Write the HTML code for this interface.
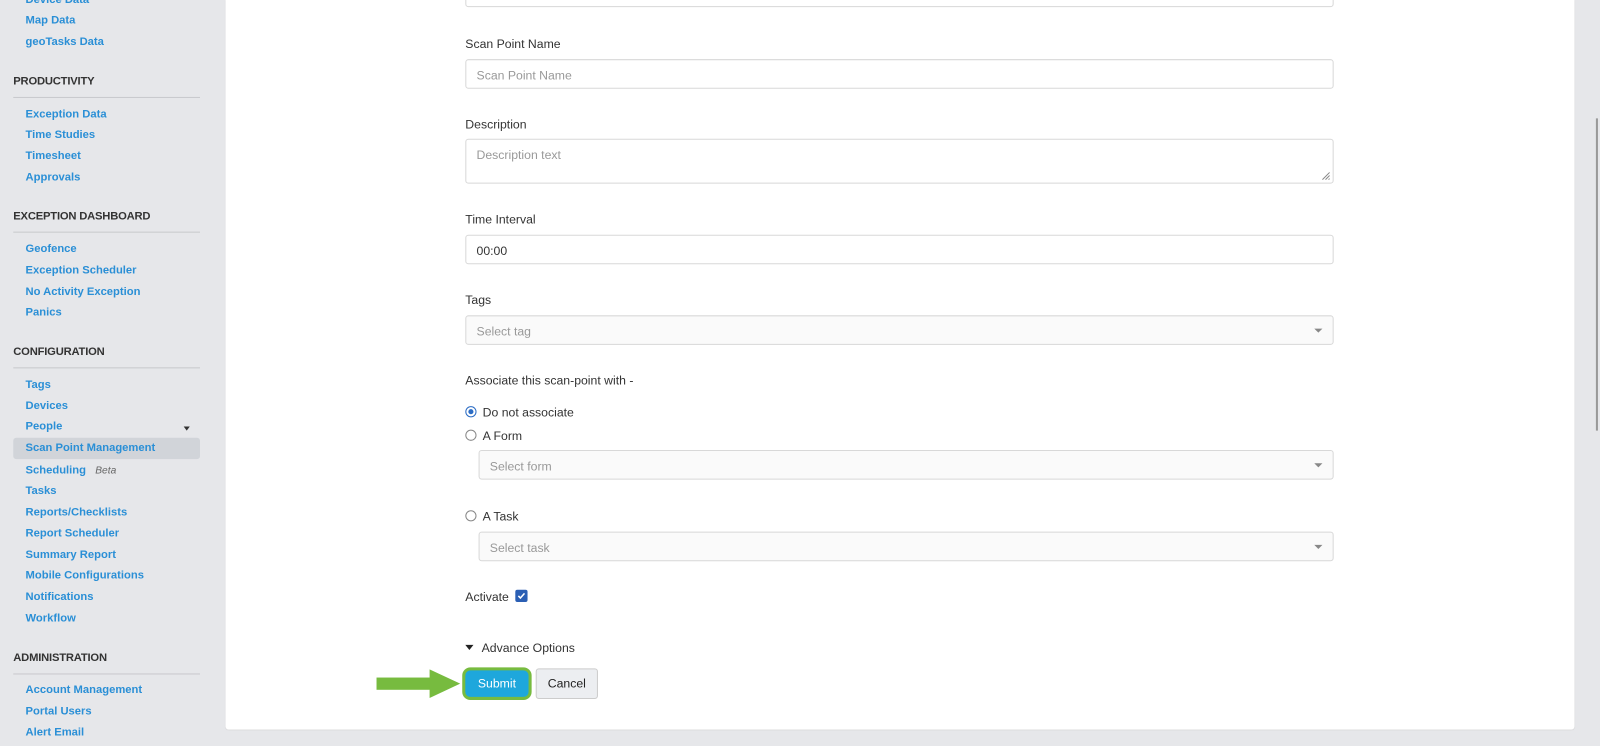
<!DOCTYPE html>
<html><head><style>
*{box-sizing:border-box;margin:0;padding:0}
body{width:1600px;height:746px;background:#e6e7ea;font-family:"Liberation Sans",sans-serif;position:relative;overflow:hidden}
#w{position:absolute;left:0;top:0;width:1568px;height:731px;transform:scale(1.0204);transform-origin:0 0}
.a{position:absolute}
.sb a{position:absolute;left:25px;font-size:11px;font-weight:bold;color:#2a8fd6;text-decoration:none;white-space:nowrap}
.sb h4{position:absolute;left:13px;font-size:11px;font-weight:bold;color:#333;letter-spacing:-.2px}
.sb hr{position:absolute;left:13px;width:183px;border:0;border-top:1px solid #c8c9cc}
.card{position:absolute;left:221px;top:0;width:1322px;height:715px;background:#fff;border-radius:0 0 3px 3px;box-shadow:0 0 1px #ccc}
.lbl{position:absolute;left:456px;font-size:12px;color:#333}
.inp{position:absolute;left:456px;width:851px;height:29px;border:1px solid #d8d8d8;border-radius:3px;background:#fff;font-size:12px;color:#999;padding:8px 10px}
.sel{background:#fafafa}
.caret{position:absolute;right:10px;top:12px;width:0;height:0;border-left:4px solid transparent;border-right:4px solid transparent;border-top:4px solid #888}
.rad{position:absolute;left:456px;width:11px;height:11px;border:1px solid #888;border-radius:50%}
</style></head><body><div id="w">
<div class="sb">
<a style="top:-6px">Device Data</a>
<a style="top:14px">Map Data</a>
<a style="top:35px">geoTasks Data</a>
<h4 style="top:74px">PRODUCTIVITY</h4><hr style="top:95px">
<a style="top:106px">Exception Data</a>
<a style="top:126px">Time Studies</a>
<a style="top:147px">Timesheet</a>
<a style="top:168px">Approvals</a>
<h4 style="top:206px">EXCEPTION DASHBOARD</h4><hr style="top:227px">
<a style="top:238px">Geofence</a>
<a style="top:259px">Exception Scheduler</a>
<a style="top:280px">No Activity Exception</a>
<a style="top:300px">Panics</a>
<h4 style="top:339px">CONFIGURATION</h4><hr style="top:360px">
<a style="top:371px">Tags</a>
<a style="top:392px">Devices</a>
<a style="top:412px">People</a>
<div class="a" style="left:180px;top:418px;border-left:3.5px solid transparent;border-right:3.5px solid transparent;border-top:4px solid #333"></div>
<div class="a" style="left:13px;top:429px;width:183px;height:21px;background:#d1d4d9;border-radius:3px"></div>
<a style="top:433px">Scan Point Management</a>
<a style="top:455px">Scheduling <i style="font-weight:normal;color:#666;font-size:10px;margin-left:6px">Beta</i></a>
<a style="top:475px">Tasks</a>
<a style="top:496px">Reports/Checklists</a>
<a style="top:517px">Report Scheduler</a>
<a style="top:538px">Summary Report</a>
<a style="top:558px">Mobile Configurations</a>
<a style="top:579px">Notifications</a>
<a style="top:600px">Workflow</a>
<h4 style="top:639px">ADMINISTRATION</h4><hr style="top:660px">
<a style="top:670px">Account Management</a>
<a style="top:691px">Portal Users</a>
<a style="top:712px">Alert Email</a>
</div>
<div class="card"></div>
<div class="a" style="left:1564px;top:116px;width:2px;height:306px;background:#999"></div>
<div class="inp" style="top:-22px"></div>
<div class="lbl" style="top:36px">Scan Point Name</div>
<div class="inp" style="top:58px">Scan Point Name</div>
<div class="lbl" style="top:115px">Description</div>
<div class="inp" style="top:136px;height:44px">Description text
<svg class="a" style="right:2px;bottom:2px" width="10" height="10"><path d="M9 2L2 9M9 5L5 9M9 8L8 9" stroke="#888"/></svg></div>
<div class="lbl" style="top:208px">Time Interval</div>
<div class="inp" style="top:230px;color:#333">00:00</div>
<div class="lbl" style="top:287px">Tags</div>
<div class="inp sel" style="top:309px">Select tag<div class="caret"></div></div>
<div class="lbl" style="top:366px">Associate this scan-point with -</div>
<div class="rad" style="top:398px;border-color:#2b6cc4"><div class="a" style="left:2px;top:2px;width:5px;height:5px;border-radius:50%;background:#2b6cc4"></div></div>
<div class="lbl" style="left:473px;top:397px">Do not associate</div>
<div class="rad" style="top:421px"></div>
<div class="lbl" style="left:473px;top:420px">A Form</div>
<div class="inp sel" style="left:469px;width:838px;top:441px">Select form<div class="caret"></div></div>
<div class="rad" style="top:500px"></div>
<div class="lbl" style="left:473px;top:499px">A Task</div>
<div class="inp sel" style="left:469px;width:838px;top:521px">Select task<div class="caret"></div></div>
<div class="lbl" style="top:578px">Activate</div>
<div class="a" style="left:505px;top:578px;width:12px;height:12px;background:#2b5fb4;border-radius:2px"><svg width="12" height="12" style="display:block"><path d="M3 6l2 2 4-4.5" stroke="#fff" stroke-width="1.5" fill="none"/></svg></div>
<div class="a" style="left:456px;top:632px;border-left:4px solid transparent;border-right:4px solid transparent;border-top:5px solid #222"></div>
<div class="lbl" style="left:472px;top:628px">Advance Options</div>
<div class="a" style="left:369px;top:664px;width:55px;height:12px;background:#77bb3f"></div>
<div class="a" style="left:421px;top:656px;border-top:14px solid transparent;border-bottom:14px solid transparent;border-left:30px solid #77bb3f"></div>
<div class="a" style="left:453px;top:654px;width:68px;height:32px;border:3px solid #77bb3f;border-radius:8px;background:#1ea7dc;color:#fff;font-size:12px;text-align:center;line-height:26px">Submit</div>
<div class="a" style="left:525px;top:655px;width:61px;height:30px;border:1px solid #ccc;border-radius:3px;background:#eceef1;color:#222;font-size:12px;text-align:center;line-height:28px">Cancel</div>
</div></body></html>
